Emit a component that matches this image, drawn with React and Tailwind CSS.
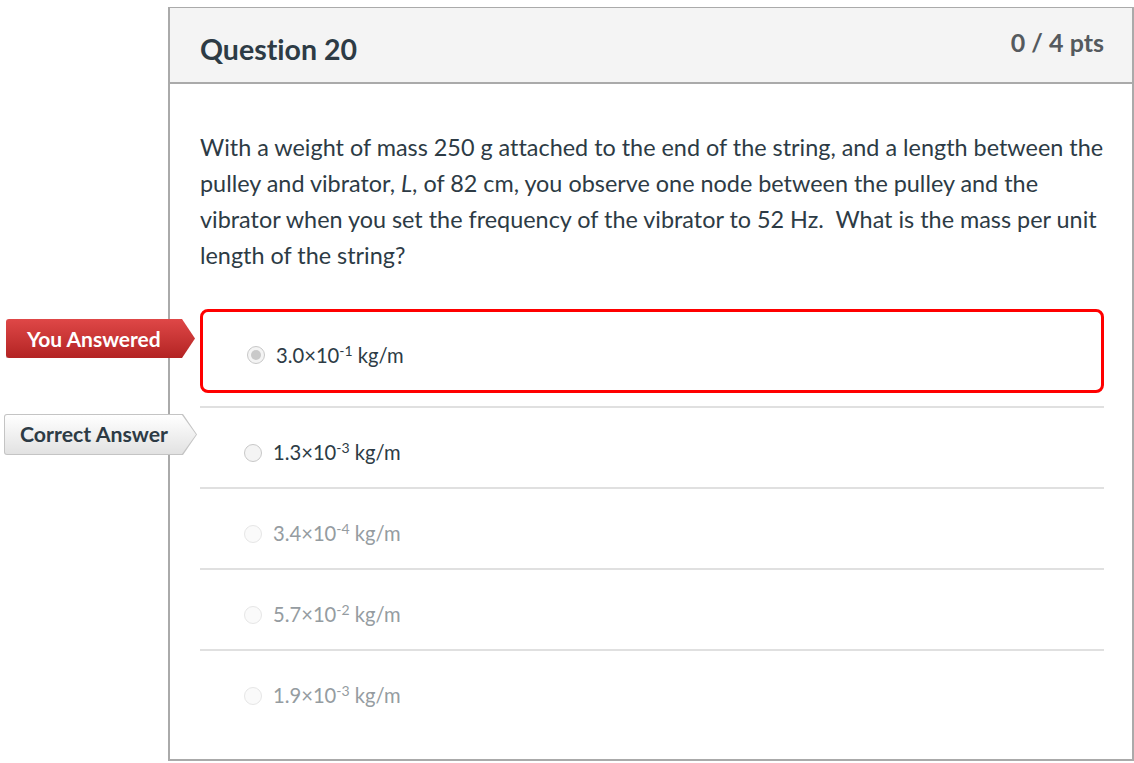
import React from "react";

const answers = [
  { base: "1.3×10", exp: "-3", tag: "correct", muted: false },
  { base: "3.4×10", exp: "-4", muted: true },
  { base: "5.7×10", exp: "-2", muted: true },
  { base: "1.9×10", exp: "-3", muted: true },
];

function Radio({ checked, muted }) {
  return (
    <span
      className={`flex h-[18px] w-[18px] shrink-0 items-center justify-center rounded-full border ${
        muted ? "border-[#e6e6e6] bg-[#fafafa]" : "border-[#c8c8c8] bg-[#f4f4f4]"
      }`}
    >
      {checked && <span className="h-[10px] w-[10px] rounded-full bg-[#c9c9c9]" />}
    </span>
  );
}

function Value({ base, exp }) {
  return (
    <span>
      {base}
      <sup className="text-[14px]">{exp}</sup> kg/m
    </span>
  );
}

export default function App() {
  return (
    <div className="min-h-[763px] bg-white pl-[168px] pt-[7px] font-['Lato','Liberation_Sans',sans-serif] text-[#2d3b45] [font-variant-ligatures:none]">
      <div className="w-[966px] border-x-2 border-b-2 border-t border-[#aaaaaa]">
        {/* header */}
        <div className="flex h-[76px] items-start justify-between border-b-2 border-[#aaaaaa] bg-[#f4f4f4] pl-[30px] pr-[28px]">
          <h2 className="mt-[24px] text-[28.5px] font-bold leading-[34px]">Question 20</h2>
          <div className="mt-[19px] text-[25px] font-bold leading-[30px] text-[#555a5e]">0 / 4 pts</div>
        </div>

        {/* body */}
        <div className="pb-[29px] pl-[30px] pr-[28px] pt-[45px]">
          <p className="text-[23.4px] leading-[36px]">
            With a weight of mass 250 g attached to the end of the string, and a length between the pulley
            and vibrator, <i>L</i>, of 82 cm, you observe one node between the pulley and the vibrator when
            you set the frequency of the vibrator to 52 Hz.&nbsp; What is the mass per unit length of the
            string?
          </p>

          <div className="mt-[36px]">
            {/* selected (wrong) answer */}
            <div className="relative pb-[13px]">
              <div className="flex h-[84px] items-center gap-[11px] rounded-[8px] border-[3px] border-[#ff0000] pl-[44px] pt-[8px] text-[20.2px]">
                <Radio checked />
                <Value base="3.0×10" exp="-1" />
              </div>
              <div className="absolute left-[-194px] top-[10px] h-[39px] w-[189px] rounded-l-[3px] bg-gradient-to-b from-[#df4747] to-[#b32323] shadow-[0_1px_2px_rgba(0,0,0,0.35)] [clip-path:polygon(0_0,calc(100%-13px)_0,100%_50%,calc(100%-13px)_100%,0_100%)]">
                <div className="flex h-full items-center pl-[21px] text-[21px] font-bold text-white">You Answered</div>
              </div>
            </div>

            {answers.map((a, i) => (
              <div key={i} className="relative border-t-2 border-[#e0e0e0]">
                <div
                  className={`flex h-[79px] items-center gap-[11px] pl-[44px] pt-[10px] text-[20.2px] ${
                    a.muted ? "text-[#959ca1]" : "text-[#2d3b45]"
                  }`}
                >
                  <Radio muted={a.muted} />
                  <Value base={a.base} exp={a.exp} />
                </div>
                {a.tag === "correct" && (
                  <div className="absolute left-[-196px] top-[6px] h-[41px] w-[193px] rounded-l-[3px] bg-[#c4c4c4] [clip-path:polygon(0_0,calc(100%-14px)_0,100%_50%,calc(100%-14px)_100%,0_100%)]">
                    <div className="absolute inset-[1px] rounded-l-[2px] bg-gradient-to-b from-[#ffffff] to-[#e2e2e2] [clip-path:polygon(0_0,calc(100%-14px)_0,100%_50%,calc(100%-14px)_100%,0_100%)]">
                      <div className="flex h-full items-center pl-[15px] text-[21.3px] font-bold text-[#2d3b45]">
                        Correct Answer
                      </div>
                    </div>
                  </div>
                )}
              </div>
            ))}
          </div>
        </div>
      </div>
    </div>
  );
}
